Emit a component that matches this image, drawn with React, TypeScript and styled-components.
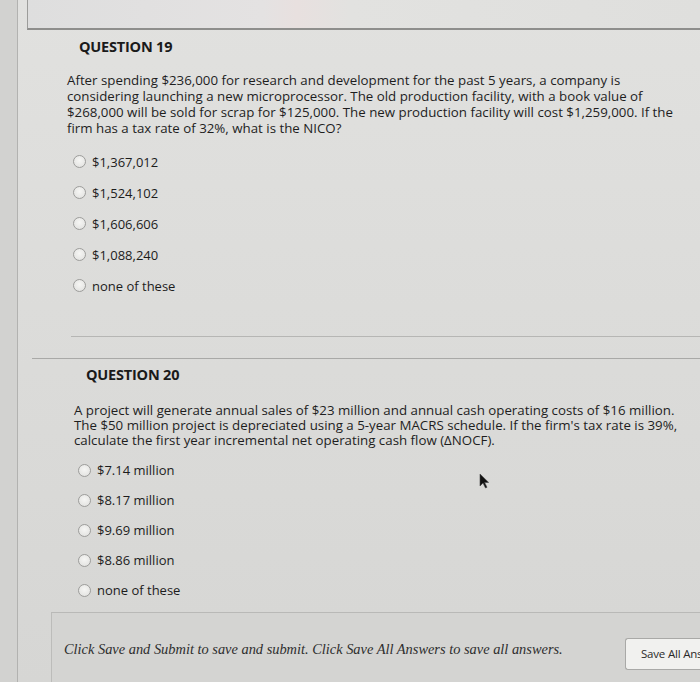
import React from "react";
import styled, { createGlobalStyle } from "styled-components";

const GlobalStyle = createGlobalStyle`
  html, body {
    margin: 0;
    padding: 0;
    width: 700px;
    height: 682px;
    overflow: hidden;
    background: #dcdcda;
  }
  * { box-sizing: border-box; }
`;

const Page = styled.div`
  position: relative;
  display: flex;
  width: 700px;
  height: 682px;
  overflow: hidden;
  background: linear-gradient(180deg, #e1e1df 0%, #dcdcda 45%, #d6d6d4 100%);
  font-family: "Open Sans", "Noto Sans", sans-serif;
  color: #232323;
`;

const Gutter = styled.div`
  width: 18px;
  flex: none;
  background: #d2d2d0;
  border-right: 1px solid #b2b2b0;
`;

const Main = styled.div`
  flex: 1;
  display: flex;
  flex-direction: column;
  min-width: 0;
`;

const TopBox = styled.div`
  height: 30px;
  margin-left: 9px;
  border-left: 1px solid #9c9c9a;
  border-bottom: 2px solid #8e8e8c;
  background: linear-gradient(90deg, #dedede 0%, #e4e2e2 35%, #e8e0df 40%, #e2e2e0 48%, #dfdfdd 100%);
`;

const Heading = styled.div<{ $indent: number; $top: number }>`
  margin-top: ${(p) => p.$top}px;
  padding-left: ${(p) => p.$indent}px;
  font-size: 14.5px;
  font-weight: 700;
  line-height: 20px;
  letter-spacing: -0.2px;
  color: #1a1a1a;
`;

const Body = styled.div<{ $indent: number; $top: number; $lh: number }>`
  margin-top: ${(p) => p.$top}px;
  padding-left: ${(p) => p.$indent}px;
  font-size: 13.3px;
  line-height: ${(p) => p.$lh}px;
  color: #1e1e1e;
`;

const Line = styled.span`
  display: block;
  white-space: nowrap;
`;

const Options = styled.div<{ $indent: number; $top: number; $row: number }>`
  margin-top: ${(p) => p.$top}px;
  padding-left: ${(p) => p.$indent}px;
  display: grid;
  grid-auto-rows: ${(p) => p.$row}px;
`;

const Option = styled.label`
  display: flex;
  align-items: center;
  gap: 6px;
  font-size: 13px;
  color: #1c1c1c;
  white-space: nowrap;
`;

const Radio = styled.span`
  width: 13px;
  height: 13px;
  flex: none;
  border-radius: 50%;
  border: 1px solid #9d9d9b;
  background: radial-gradient(circle at 50% 40%, #f6f6f4 0%, #e6e6e4 70%, #d4d4d2 100%);
`;

const Rule = styled.div<{ $indent: number; $top: number; $color: string }>`
  margin-top: ${(p) => p.$top}px;
  margin-left: ${(p) => p.$indent}px;
  height: 1px;
  background: ${(p) => p.$color};
`;

const Footer = styled.div`
  margin-top: 7px;
  margin-left: 33px;
  height: 70px;
  display: flex;
  align-items: center;
  padding: 4px 0 0 12px;
  background: #d4d4d2;
  border-top: 1px solid #b9b9b7;
  border-left: 1px solid #bcbcba;
`;

const FooterText = styled.div`
  flex: none;
  width: 561px;
  font-family: "Liberation Serif", "DejaVu Serif", serif;
  font-style: italic;
  font-size: 14.4px;
  color: #2e2e2e;
  white-space: nowrap;
`;

const SaveButton = styled.button`
  flex: none;
  height: 32px;
  padding: 0 0 0 15px;
  margin-top: 8px;
  font-family: "Open Sans", "Noto Sans", sans-serif;
  font-size: 11.5px;
  letter-spacing: -0.2px;
  color: #2a2a2a;
  background: #f1f1ef;
  border: 1px solid #a9a9a7;
  border-right: none;
  border-radius: 3px 0 0 3px;
  white-space: nowrap;
  overflow: hidden;
  text-align: left;
  width: 76px;
`;

const Cursor = styled.svg`
  position: absolute;
  left: 479px;
  top: 473px;
`;

const q19Options = ["$1,367,012", "$1,524,102", "$1,606,606", "$1,088,240", "none of these"];
const q20Options = ["$7.14 million", "$8.17 million", "$9.69 million", "$8.86 million", "none of these"];

export default function App() {
  return (
    <>
      <GlobalStyle />
      <Page>
        <Gutter />
        <Main>
          <TopBox />

          <Heading $indent={61} $top={7}>QUESTION 19</Heading>
          <Body $indent={49} $top={15} $lh={16}>
            <Line>After spending $236,000 for research and development for the past 5 years, a company is</Line>
            <Line>considering launching a new microprocessor. The old production facility, with a book value of</Line>
            <Line>$268,000 will be sold for scrap for $125,000. The new production facility will cost $1,259,000. If the</Line>
            <Line>firm has a tax rate of 32%, what is the NICO?</Line>
          </Body>
          <Options $indent={55} $top={10} $row={31}>
            {q19Options.map((o) => (
              <Option key={o}>
                <Radio />
                {o}
              </Option>
            ))}
          </Options>

          <Rule $indent={53} $top={35} $color="#b6b6b4" />
          <Rule $indent={14} $top={21} $color="#a9a9a7" />

          <Heading $indent={68} $top={6}>QUESTION 20</Heading>
          <Body $indent={56} $top={18} $lh={15}>
            <Line>A project will generate annual sales of $23 million and annual cash operating costs of $16 million.</Line>
            <Line>The $50 million project is depreciated using a 5-year MACRS schedule. If the firm's tax rate is 39%,</Line>
            <Line>calculate the first year incremental net operating cash flow (ΔNOCF).</Line>
          </Body>
          <Options $indent={60} $top={7} $row={30}>
            {q20Options.map((o) => (
              <Option key={o}>
                <Radio />
                {o}
              </Option>
            ))}
          </Options>

          <Footer>
            <FooterText>
              Click Save and Submit to save and submit. Click Save All Answers to save all answers.
            </FooterText>
            <SaveButton>Save All Ans</SaveButton>
          </Footer>
        </Main>
        <Cursor width="11" height="16" viewBox="0 0 11 16">
          <path d="M1 1 L1 13 L4 10 L6.5 15 L8 14.3 L5.6 9.4 L9.6 9.4 Z" fill="#111" stroke="#444" strokeWidth="0.6" />
        </Cursor>
      </Page>
    </>
  );
}
